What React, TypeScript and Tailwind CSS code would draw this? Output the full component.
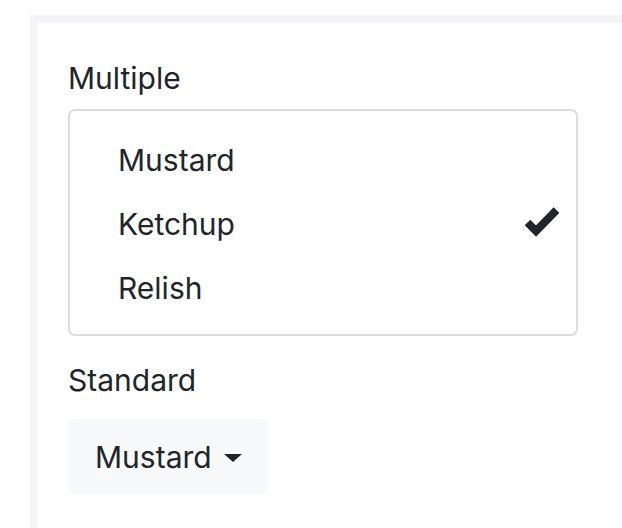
import React from 'react';

const options = ['Mustard', 'Ketchup', 'Relish'];

const CheckIcon = () => (
  <svg width="36" height="30" viewBox="0 0 36 30" className="shrink-0 -mt-[5px]">
    <polyline points="4.5,15.5 13,24 33.5,3" fill="none" stroke="#212529" strokeWidth="8" strokeLinejoin="miter" />
  </svg>
);

export default function App() {
  const selected = 'Ketchup';

  return (
    <div className="w-[622px] h-[528px] overflow-hidden bg-white font-['Inter',sans-serif] text-[#212529]">
      <div className="pl-[30px] pt-[15px]">
        <div className="w-[700px] h-[600px] border-l-8 border-t-8 border-[#f5f5f7] bg-white pl-[30px] pt-[34px]">
          <div className="text-[30px] leading-[42px]">Multiple</div>

          <div className="mt-[10px] w-[510px] h-[227px] border-2 border-[#dcdcdc] rounded-[7px] pt-[17px] pl-[48px] pr-[17px]">
            {options.map((opt) => (
              <div key={opt} className="flex items-center justify-between h-[64px] text-[30px] leading-[64px]">
                <span>{opt}</span>
                {opt === selected && <CheckIcon />}
              </div>
            ))}
          </div>

          <div className="mt-[23px] text-[30px] leading-[42px]">Standard</div>

          <button className="mt-[18px] flex items-center h-[75px] w-[200px] pl-[27px] rounded-[7px] bg-[#f8f9fa] text-[30px] leading-[42px] text-[#212529]">
            <span className="mt-[1px]">Mustard</span>
            <span className="ml-[12px] mt-[2px] w-0 h-0 border-t-[8px] border-t-[#212529] border-x-[9px] border-x-transparent" />
          </button>
        </div>
      </div>
    </div>
  );
}
